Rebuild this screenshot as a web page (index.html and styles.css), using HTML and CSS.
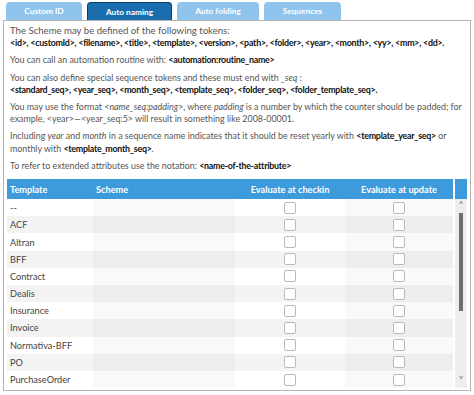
FILE: index.html
```html
<!DOCTYPE html>
<html lang="en">
<head>
    <meta charset="UTF-8">
    <title>Auto naming</title>
    <link rel="stylesheet" href="styles.css">
</head>
<body>

    <div class="tabs">
        <div class="tab tab-id">Custom ID</div>
        <div class="tab tab-naming active">Auto naming</div>
        <div class="tab tab-folding">Auto folding</div>
        <div class="tab tab-seq">Sequences</div>
    </div>

    <div class="panel">
        <p><span class="lead">The Scheme may be defined of the following tokens:</span><br>
        <b>&lt;id&gt;, &lt;customId&gt;, &lt;filename&gt;, &lt;title&gt;, &lt;template&gt;, &lt;version&gt;, &lt;path&gt;, &lt;folder&gt;, &lt;year&gt;, &lt;month&gt;, &lt;yy&gt;, &lt;mm&gt;, &lt;dd&gt;.</b></p>

        <p>You can call an automation routine with: <b>&lt;automation:routine_name&gt;</b></p>

        <p>You can also define special sequence tokens and these must end with <i>_seq</i> :<br>
        <b>&lt;standard_seq&gt;, &lt;year_seq&gt;, &lt;month_seq&gt;, &lt;template_seq&gt;, &lt;folder_seq&gt;, &lt;folder_template_seq&gt;.</b></p>

        <p>You may use the format <i>&lt;name_seq:padding&gt;</i>, where <i>padding</i> is a number by which the counter should be padded; for<br>
        example, &lt;year&gt;&mdash;&lt;year_seq:5&gt; will result in something like 2008-00001.</p>

        <p>Including <i>year</i> and <i>month</i> in a sequence name indicates that it should be reset yearly with <b>&lt;template_year_seq&gt;</b> or<br>
        monthly with <b>&lt;template_month_seq&gt;</b>.</p>

        <p>To refer to extended attributes use the notation: <b>&lt;name-of-the-attribute&gt;</b></p>

        <div class="grid">
            <div class="table">
                <div class="row head">
                    <div class="cell c-template">Template</div>
                    <div class="cell c-scheme">Scheme</div>
                    <div class="cell c-check">Evaluate at checkin</div>
                    <div class="cell c-update">Evaluate at update</div>
                </div>
                <div id="rows"></div>
            </div>
            <div class="scrollbar">
                <div class="scroll-head"></div>
                <div class="scroll-track">
                    <span class="arrow">&#x2C4;</span>
                    <div class="thumb"></div>
                    <span class="arrow down">&#x2C5;</span>
                </div>
            </div>
        </div>
    </div>

    <script>
        // fill the template rows
        const templates = ['--', 'ACF', 'Altran', 'BFF', 'Contract', 'Dealis', 'Insurance',
            'Invoice', 'Normativa-BFF', 'PO', 'PurchaseOrder'];
        const rows = document.getElementById('rows');
        templates.forEach(function(name) {
            const row = document.createElement('div');
            row.className = 'row';
            row.innerHTML =
                '<div class="cell c-template">' + name + '</div>' +
                '<div class="cell c-scheme"></div>' +
                '<div class="cell c-check"><span class="box"></span></div>' +
                '<div class="cell c-update"><span class="box"></span></div>';
            rows.appendChild(row);
        });
    </script>

</body>
</html>
```

FILE: styles.css
```css
body {
    margin: 0;
    font-family: Lato, 'Liberation Sans', sans-serif;
    font-size: 9.2px;
    color: #555;
    background: #fff;
}

.tabs {
    display: flex;
    gap: 5px;
    padding: 2px 0 0 6px;
    height: 18px;
}

.tab {
    height: 18px;
    line-height: 19px;
    text-align: center;
    color: #fff;
    font-weight: bold;
    font-size: 8.3px;
    background: #8fc4ec;
    border-radius: 4px 4px 0 0;
    box-sizing: border-box;
}

.tab-id { width: 76px; }
.tab-naming { width: 85px; }
.tab-folding { width: 82px; }
.tab-seq { width: 77px; }

.tab.active {
    background: #1b6eae;
    border: 1px solid #0d3f66;
    border-bottom: none;
    line-height: 18px;
}

.panel {
    margin: 0 3px;
    height: 371px;
    box-sizing: border-box;
    border: 1px solid #b5b5b5;
    padding: 4px 3px 0 3px;
    overflow: hidden;
}

.panel p {
    margin: 0 0 5px 3px;
    font-size: 8.9px;
    line-height: 12.2px;
    white-space: nowrap;
}

.panel .lead {
    font-size: 9.6px;
}

.panel b {
    color: #111;
    letter-spacing: -0.25px;
}

.grid {
    display: flex;
    gap: 2px;
    margin-top: 7px;
}

.table {
    width: 446px;
}

.row {
    display: flex;
    height: 17.2px;
    align-items: center;
}

.row:nth-child(even) {
    background: #f3f3f3;
}

.cell {
    height: 100%;
    display: flex;
    align-items: center;
    box-sizing: border-box;
    color: #444;
}

.c-template { width: 86px; padding-left: 3px; }
.c-scheme { width: 142px; background: rgba(0, 0, 0, 0.025); padding-left: 3px; }
.c-check { width: 110px; justify-content: center; }
.c-update { width: 108px; justify-content: center; background: rgba(0, 0, 0, 0.025); }

.row.head {
    height: 20px;
    background: #3d9bdc;
}

.row.head .cell {
    color: #fff;
    font-weight: bold;
    background: none;
}

.box {
    width: 12px;
    height: 12px;
    box-sizing: border-box;
    border: 1px solid #b9b9b9;
    border-radius: 2px;
    background: #fff;
}

.scrollbar {
    width: 12px;
    display: flex;
    flex-direction: column;
}

.scroll-head {
    height: 20px;
    background: #3d9bdc;
}

.scroll-track {
    height: 189px;
    background: #eeeeee;
    display: flex;
    flex-direction: column;
    align-items: center;
}

.arrow {
    font-size: 9px;
    line-height: 10px;
    height: 10px;
    color: #666;
    margin-top: 1px;
}

.arrow.down {
    margin-top: auto;
    margin-bottom: 3px;
}

.thumb {
    width: 4px;
    height: 98px;
    background: #6e6e6e;
    margin-top: 3px;
}
```
